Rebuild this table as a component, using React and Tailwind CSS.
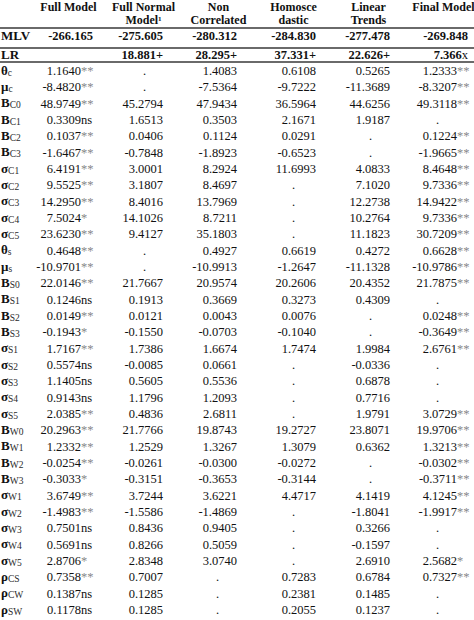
import React from "react";

const NUMW = ["w-[50px]", "w-[57px]", "w-[56px]", "w-[60px]", "w-[59px]", "w-[51px]"];
const RW = ["w-[62px]", "w-[57px]", "w-[56px]", "w-[60px]", "w-[59px]", "w-[62px]"];
const DOTPR = ["pr-[18px]", "pr-[17px]", "pr-[18px]", "pr-[21px]", "pr-[18px]", "pr-[18px]"];

const rows = [
  ["θ", "c", ["1.1640**", ".", "1.4083", "0.6108", "0.5265", "1.2333**"]],
  ["μ", "c", ["-8.4820**", ".", "-7.5364", "-9.7222", "-11.3689", "-8.3207**"]],
  ["B", "C0", ["48.9749**", "45.2794", "47.9434", "36.5964", "44.6256", "49.3118**"]],
  ["B", "C1", ["0.3309ns", "1.6513", "0.3503", "2.1671", "1.9187", "."]],
  ["B", "C2", ["0.1037**", "0.0406", "0.1124", "0.0291", ".", "0.1224**"]],
  ["B", "C3", ["-1.6467**", "-0.7848", "-1.8923", "-0.6523", ".", "-1.9665**"]],
  ["σ", "C1", ["6.4191**", "3.0001", "8.2924", "11.6993", "4.0833", "8.4648**"]],
  ["σ", "C2", ["9.5525**", "3.1807", "8.4697", ".", "7.1020", "9.7336**"]],
  ["σ", "C3", ["14.2950**", "8.4016", "13.7969", ".", "12.2738", "14.9422**"]],
  ["σ", "C4", ["7.5024*", "14.1026", "8.7211", ".", "10.2764", "9.7336**"]],
  ["σ", "C5", ["23.6230**", "9.4127", "35.1803", ".", "11.1823", "30.7209**"]],
  ["θ", "s", ["0.4648**", ".", "0.4927", "0.6619", "0.4272", "0.6628**"]],
  ["μ", "s", ["-10.9701**", ".", "-10.9913", "-1.2647", "-11.1328", "-10.9786**"]],
  ["B", "S0", ["22.0146**", "21.7667", "20.9574", "20.2606", "20.4352", "21.7875**"]],
  ["B", "S1", ["0.1246ns", "0.1913", "0.3669", "0.3273", "0.4309", "."]],
  ["B", "S2", ["0.0149**", "0.0121", "0.0043", "0.0076", ".", "0.0248**"]],
  ["B", "S3", ["-0.1943*", "-0.1550", "-0.0703", "-0.1040", ".", "-0.3649**"]],
  ["σ", "S1", ["1.7167**", "1.7386", "1.6674", "1.7474", "1.9984", "2.6761**"]],
  ["σ", "S2", ["0.5574ns", "-0.0085", "0.0661", ".", "-0.0336", "."]],
  ["σ", "S3", ["1.1405ns", "0.5605", "0.5536", ".", "0.6878", "."]],
  ["σ", "S4", ["0.9143ns", "1.1796", "1.2093", ".", "0.7716", "."]],
  ["σ", "S5", ["2.0385**", "0.4836", "2.6811", ".", "1.9791", "3.0729**"]],
  ["B", "W0", ["20.2963**", "21.7766", "19.8743", "19.2727", "23.8071", "19.9706**"]],
  ["B", "W1", ["1.2332**", "1.2529", "1.3267", "1.3079", "0.6362", "1.3213**"]],
  ["B", "W2", ["-0.0254**", "-0.0261", "-0.0300", "-0.0272", ".", "-0.0302**"]],
  ["B", "W3", ["-0.3033*", "-0.3151", "-0.3653", "-0.3144", ".", "-0.3711**"]],
  ["σ", "W1", ["3.6749**", "3.7244", "3.6221", "4.4717", "4.1419", "4.1245**"]],
  ["σ", "W2", ["-1.4983**", "-1.5586", "-1.4869", ".", "-1.8041", "-1.9917**"]],
  ["σ", "W3", ["0.7501ns", "0.8436", "0.9405", ".", "0.3266", "."]],
  ["σ", "W4", ["0.5691ns", "0.8266", "0.5059", ".", "-0.1597", "."]],
  ["σ", "W5", ["2.8706*", "2.8348", "3.0740", ".", "2.6910", "2.5682*"]],
  ["ρ", "CS", ["0.7358**", "0.7007", ".", "0.7283", "0.6784", "0.7327**"]],
  ["ρ", "CW", ["0.1387ns", "0.1285", ".", "0.2381", "0.1485", "."]],
  ["ρ", "SW", ["0.1178ns", "0.1285", ".", "0.2055", "0.1237", "."]],
];

function Cell({ v, i }) {
  if (v === ".") {
    return (
      <div className="w-[75px] flex">
        <span className={`${NUMW[i]} ${DOTPR[i]} text-right`}>.</span>
      </div>
    );
  }
  const m = v.match(/^(-?\d+\.\d+)(.*)$/);
  const num = m ? m[1] : v;
  const suf = m ? m[2] : "";
  const star = suf.startsWith("*");
  return (
    <div className="w-[75px] flex whitespace-nowrap">
      <span className={`${NUMW[i]} text-right shrink-0`}>{num}</span>
      <span className={star ? "text-[#888]" : ""}>{suf}</span>
    </div>
  );
}

function Label({ s, sub }) {
  return (
    <div className="w-[31px] shrink-0 pl-[1px] flex items-baseline whitespace-nowrap">
      <span className="font-bold text-[13px]">{s}</span>
      <span className="text-[9.5px] relative top-[1px] text-[#2a2a2a]">{sub}</span>
    </div>
  );
}

function Line() {
  return <div className="h-[2px] bg-[#6a6a6a]" />;
}

export default function App() {
  const heads = [
    <>Full Model</>,
    <>
      Full Normal
      <br />
      Model<sup className="text-[7px]">1</sup>
    </>,
    <>
      Non
      <br />
      Correlated
    </>,
    <>
      Homosce
      <br />
      dastic
    </>,
    <>
      Linear
      <br />
      Trends
    </>,
    <>Final Model</>,
  ];
  const mlv = ["-266.165", "-275.605", "-280.312", "-284.830", "-277.478", "-269.848"];
  const lr = ["", "18.881+", "28.295+", "37.331+", "22.626+", "7.366"];
  return (
    <div className="w-[474px] h-[620px] overflow-hidden bg-white text-[#111] font-['Liberation_Serif',serif] text-[12.5px]">
      <div className="w-[481px]">
        <div className="flex h-[27px] pt-[1px]">
          <div className="w-[31px] shrink-0" />
          {heads.map((h, i) => (
            <div
              key={i}
              className="w-[75px] shrink-0 text-center font-bold text-[12px] leading-[13px] whitespace-nowrap"
            >
              {h}
            </div>
          ))}
        </div>
        <Line />
        <div className="flex h-[18px] leading-[14px] font-bold">
          <div className="w-[31px] shrink-0 pl-[1px] text-[13px]">MLV</div>
          {mlv.map((v, i) => (
            <div key={i} className="w-[75px] shrink-0 flex">
              <span className={`${RW[i]} text-right`}>{v}</span>
            </div>
          ))}
        </div>
        <Line />
        <div className="flex h-[12px] leading-[12px] font-bold">
          <div className="w-[31px] shrink-0 pl-[1px] text-[13px]">LR</div>
          {lr.map((v, i) => (
            <div key={i} className="w-[75px] shrink-0 flex">
              <span className={`${RW[i]} text-right whitespace-nowrap`}>
                {v}
                {i === 5 && <span className="font-normal">x</span>}
              </span>
            </div>
          ))}
        </div>
        <Line />
        {rows.map(([s, sub, vals], r) => (
          <div key={r} className="flex h-[16.33px] items-center leading-[16px]">
            <Label s={s} sub={sub} />
            {vals.map((v, i) => (
              <Cell key={i} v={v} i={i} />
            ))}
          </div>
        ))}
      </div>
    </div>
  );
}
